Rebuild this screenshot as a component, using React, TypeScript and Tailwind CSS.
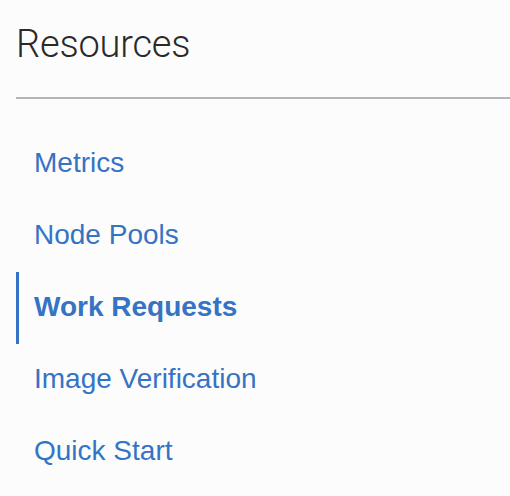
export default function App() {
  const items = ["Metrics", "Node Pools", "Work Requests", "Image Verification", "Quick Start"];
  const active = "Work Requests";
  return (
    <div className="w-[510px] h-[496px] bg-[#fcfcfc] pl-4 overflow-hidden" style={{ fontFamily: '"Liberation Sans", Arial, sans-serif' }}>
      <h1
        className="h-[97px] pt-[20px] text-[38px] leading-[48px] font-light text-[#2a2a2a] tracking-[-0.2px]"
        style={{ fontFamily: 'Roboto, "Liberation Sans", sans-serif' }}
      >
        Resources
      </h1>
      <div className="h-[2px] bg-[#b3b6b9]" />
      <ul className="mt-[29px]">
        {items.map((it) => (
          <li
            key={it}
            className={
              it === active
                ? "h-[72px] border-l-[3px] border-[#3573c5] pl-[15px] text-[28px] leading-[70px] font-bold text-[#3573c5]"
                : "h-[72px] pl-[18px] text-[28px] leading-[70px] text-[#3573c5]"
            }
          >
            {it}
          </li>
        ))}
      </ul>
    </div>
  );
}
